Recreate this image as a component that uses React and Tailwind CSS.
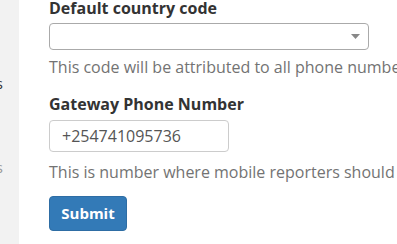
export default function App() {
  return (
    <div
      className="flex h-[244px] w-[397px] overflow-hidden bg-white"
      style={{ fontFamily: '"Open Sans", sans-serif' }}
    >
      <div className="relative w-[19px] shrink-0 bg-[#f2f2f2] text-[#333] text-[15px]">
        <span className="absolute right-[16px] top-[72px]">s</span>
        <span className="absolute right-[16px] top-[156px] text-[#999]">s</span>
      </div>
      <div className="flex-1 pl-[30px] -mt-[3px] whitespace-nowrap">
        <div className="text-[16px] font-bold text-[#333] leading-[22px]">Default country code</div>
        <div className="mt-[4px] flex h-[27px] w-[320px] items-center justify-end rounded-[4px] border border-[#aaa] bg-white pr-[8px]">
          <svg width="9" height="5" viewBox="0 0 9 5">
            <path d="M0 0h9L4.5 5z" fill="#888" />
          </svg>
        </div>
        <div className="mt-[6px] text-[16px] text-[#737373] leading-[22px]">
          This code will be attributed to all phone numbers
        </div>
        <div className="mt-[15px] text-[16px] font-bold text-[#333] leading-[22px]">Gateway Phone Number</div>
        <div className="mt-[5px] flex h-[32px] w-[180px] items-center rounded-[4px] border border-[#ccc] bg-white px-[12px] text-[16px] text-[#555]">
          +254741095736
        </div>
        <div className="mt-[9px] text-[16px] text-[#737373] leading-[22px]">
          This is number where mobile reporters should send messages
        </div>
        <button className="mt-[13px] h-[35px] w-[78px] rounded-[4px] border border-[#2e6da4] bg-[#337ab7] text-[15px] font-bold text-white">
          Submit
        </button>
      </div>
    </div>
  );
}
